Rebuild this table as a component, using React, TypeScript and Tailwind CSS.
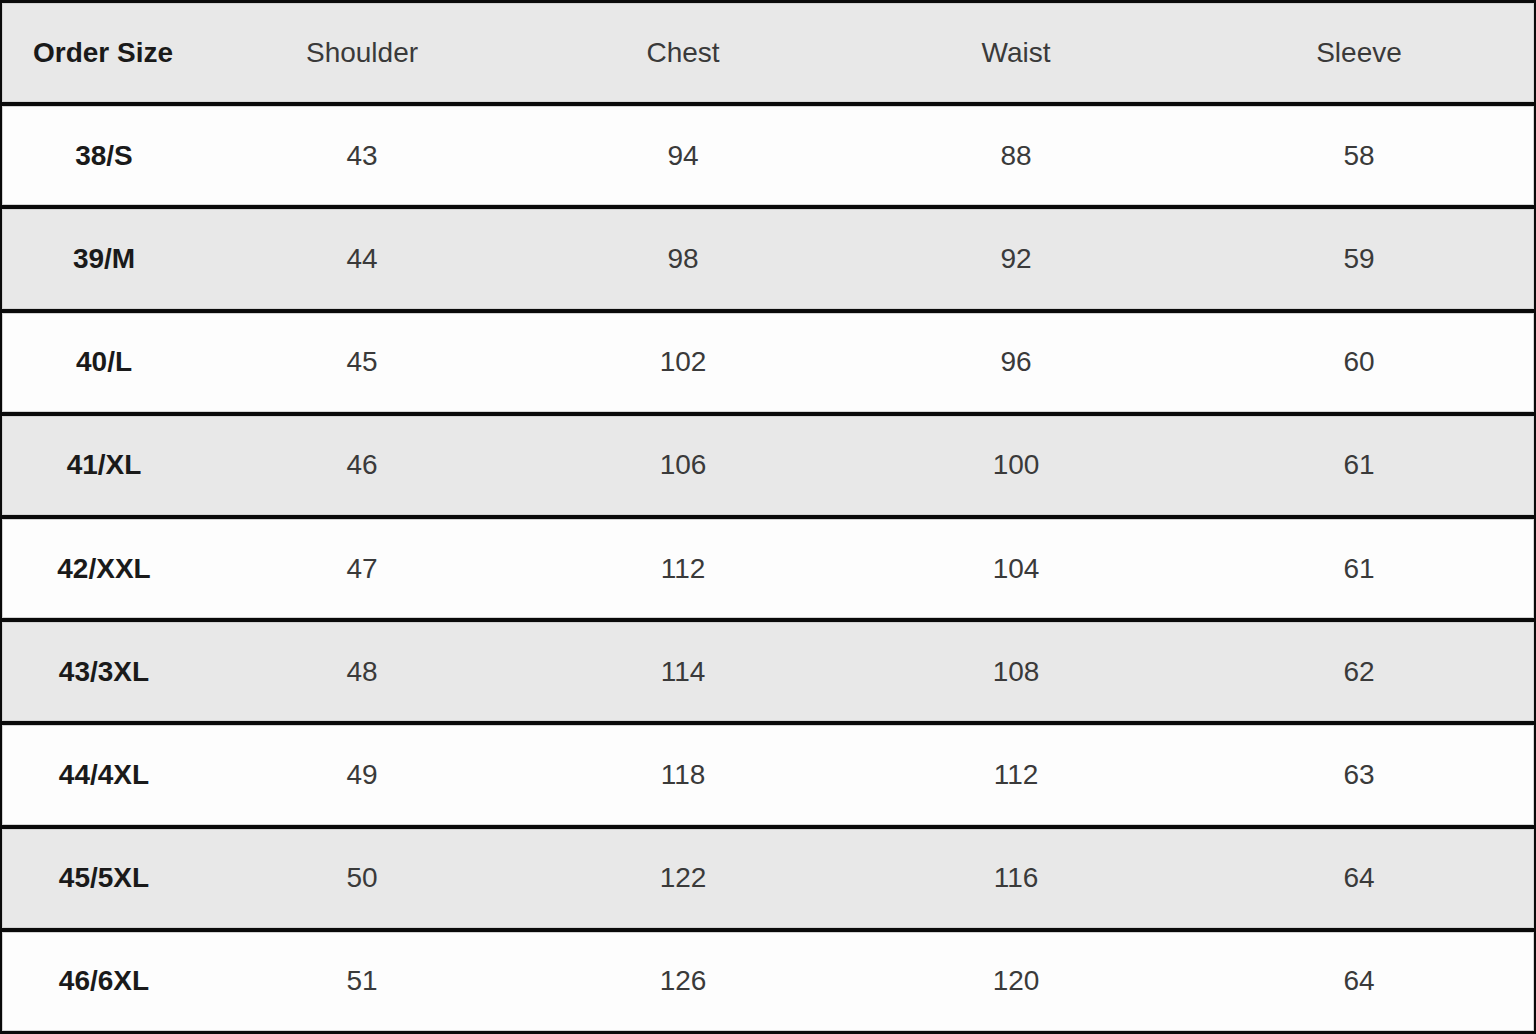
import React from "react";

const rows: [string, string, string, string, string][] = [
  ["38/S", "43", "94", "88", "58"],
  ["39/M", "44", "98", "92", "59"],
  ["40/L", "45", "102", "96", "60"],
  ["41/XL", "46", "106", "100", "61"],
  ["42/XXL", "47", "112", "104", "61"],
  ["43/3XL", "48", "114", "108", "62"],
  ["44/4XL", "49", "118", "112", "63"],
  ["45/5XL", "50", "122", "116", "64"],
  ["46/6XL", "51", "126", "120", "64"],
];

const cols = "grid grid-cols-[202px_314px_328px_338px_1fr] items-center";

export default function App() {
  return (
    <div className="w-[1536px] h-[1034px] bg-[#0a0a0a] pt-[3px] pb-[3px] pl-[2px] pr-[2px] flex flex-col gap-[4px] font-['Liberation_Sans',Arial,sans-serif]">
      <div className={`${cols} flex-1 bg-[#e8e8e8] border border-[#d4d4d4] text-[28px] text-[#3a3a3a]`}>
        <div className="text-center font-bold text-[#1a1a1a] text-[28px] -ml-[2px]">Order Size</div>
        <div className="text-center">Shoulder</div>
        <div className="text-center">Chest</div>
        <div className="text-center">Waist</div>
        <div className="text-center">Sleeve</div>
      </div>
      {rows.map((r, i) => (
        <div
          key={r[0]}
          className={`${cols} flex-1 border border-[#d4d4d4] text-[28px] text-[#3a3a3a] ${
            i % 2 === 0 ? "bg-[#fdfdfd]" : "bg-[#e8e8e8]"
          }`}
        >
          <div className="text-center font-bold text-[#1a1a1a]">{r[0]}</div>
          <div className="text-center">{r[1]}</div>
          <div className="text-center">{r[2]}</div>
          <div className="text-center">{r[3]}</div>
          <div className="text-center">{r[4]}</div>
        </div>
      ))}
    </div>
  );
}
